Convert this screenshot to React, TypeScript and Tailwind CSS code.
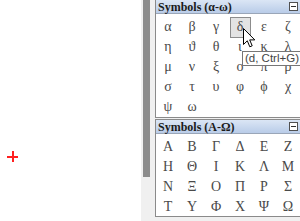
import React from 'react';

const lower = ['α', 'β', 'γ', 'δ', 'ε', 'ζ', 'η', 'ϑ', 'θ', 'ι', 'κ', 'λ', 'μ', 'ν', 'ξ', 'ο', 'π', 'ρ', 'σ', 'τ', 'υ', 'φ', 'ϕ', 'χ', 'ψ', 'ω'];
const upper = ['Α', 'Β', 'Γ', 'Δ', 'Ε', 'Ζ', 'Η', 'Θ', 'Ι', 'Κ', 'Λ', 'Μ', 'Ν', 'Ξ', 'Ο', 'Π', 'Ρ', 'Σ', 'Τ', 'Υ', 'Φ', 'Χ', 'Ψ', 'Ω'];

const serif = "font-['Liberation_Serif','DejaVu_Serif',serif]";

const PanelHeader: React.FC<{ title: string }> = ({ title }) => (
  <div className="h-[14px] flex items-center justify-between pl-[2px] pr-[2px] bg-gradient-to-b from-[#dbe6f5] to-[#b9cce8] border-b border-[#9aa6b8]">
    <span className={`${serif} text-[12px] leading-none font-bold text-[#1b1b1b]`}>{title}</span>
    <span className="w-[9px] h-[9px] border border-[#505050] bg-white flex items-center justify-center">
      <span className="w-[5px] h-px bg-[#303030]" />
    </span>
  </div>
);

const SymbolGrid: React.FC<{ items: string[]; hot?: number }> = ({ items, hot }) => (
  <div className="grid grid-cols-[repeat(6,24px)] auto-rows-[20px] pt-[3px]">
    {items.map((s, i) => (
      <div key={i} className="flex items-center justify-center">
        <span
          className={`${serif} w-[21px] h-[21px] flex items-center justify-center text-[14px] leading-none text-[#4a4a4a] ${
            i === hot ? 'bg-[#e3e3e3] border border-[#8c8c8c]' : ''
          }`}
        >
          {s}
        </span>
      </div>
    ))}
  </div>
);

const Cursor: React.FC = () => (
  <svg width="13" height="21" viewBox="0 0 13 21" className="absolute left-[243px] top-[28px]">
    <path d="M0.5 0.5 L0.5 16.5 L4.3 12.8 L6.8 18.8 L9.2 17.8 L6.7 11.9 L11.8 11.9 Z" fill="#ffffff" stroke="#000000" strokeWidth="1" strokeLinejoin="round" />
  </svg>
);

export default function App() {
  return (
    <div className="relative w-[300px] h-[221px] flex overflow-hidden bg-white">
      {/* drawing canvas */}
      <div className="relative w-[141px] shrink-0 h-full bg-white">
        <div className="absolute left-[7px] top-[156px] w-[11px] h-[1.5px] bg-[#ff2020]" />
        <div className="absolute left-[12px] top-[151px] w-[1.5px] h-[11px] bg-[#ff2020]" />
      </div>

      {/* scrollbar */}
      <div className="w-[14px] shrink-0 h-full bg-[#f0f0f0] pl-[2px]">
        <div className="w-[7px] h-[177px] bg-[#8c8c8c]" />
      </div>

      {/* symbol panels */}
      <div className="flex-1 min-w-0 overflow-hidden h-full bg-[#f0f0f0] flex flex-col gap-px">
        <div className="w-[145px] shrink-0 bg-white border-l border-b border-[#8a8a8a] h-[118px]">
          <PanelHeader title="Symbols (α-ω)" />
          <SymbolGrid items={lower} hot={3} />
        </div>
        <div className="w-[145px] shrink-0 bg-white border-l border-t border-b border-[#8a8a8a] h-[98px]">
          <PanelHeader title="Symbols (Α-Ω)" />
          <SymbolGrid items={upper} />
        </div>
      </div>

      <Cursor />
      <div className="absolute left-[242px] top-[51px] h-[15px] w-[70px] bg-white border border-[#767676] pl-[2px] flex items-center font-['Liberation_Sans','DejaVu_Sans',sans-serif] text-[11.5px] leading-none text-[#444] whitespace-nowrap">
        (d, Ctrl+G)
      </div>
    </div>
  );
}
